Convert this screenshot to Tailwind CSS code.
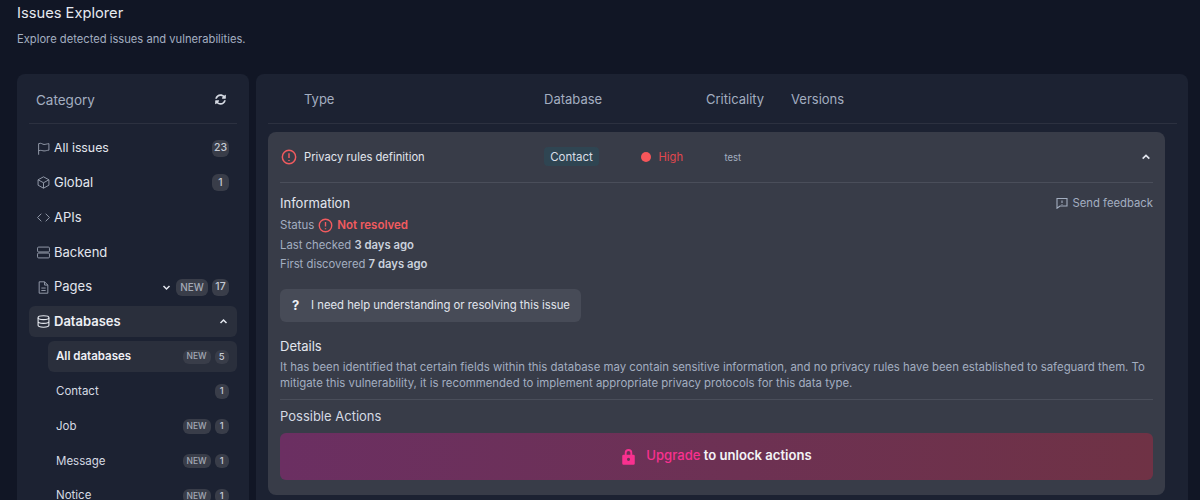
<!DOCTYPE html>
<html lang="en">
<head>
    <meta charset="UTF-8">
    <title>Issues Explorer</title>
    <script src="https://cdn.jsdelivr.net/npm/@tailwindcss/browser@4"></script>
</head>
<body class="h-[500px] overflow-hidden bg-[#111625] font-['Inter',sans-serif] text-[#cbd5e1]">
    <div class="px-[17px] pt-[3px]">
        <h1 class="h-[20px] text-[14.7px] leading-[20px] text-[#e5e9f0]">Issues Explorer</h1>
        <p class="mt-[7px] h-[18px] text-[11.2px] leading-[18px] text-[#a3aec0]">Explore detected issues and vulnerabilities.</p>

        <div class="mt-[26px] flex gap-[7px]">
            <!-- sidebar -->
            <aside class="h-[440px] w-[232px] shrink-0 rounded-lg bg-[#1c2232] px-[12px]">
                <div class="flex h-[49.5px] items-center justify-between border-b border-[#2c3140] pl-[7px] pr-[11px] pt-[3px]">
                    <span class="text-[13.5px] text-[#a3aec0]">Category</span>
                    <svg class="h-[11px] w-[11px] text-[#d5dae3]" viewBox="0 0 512 512" fill="currentColor"><path d="M370.72 133.28C339.458 104.008 298.888 87.962 255.848 88c-77.458.068-144.328 53.178-162.791 126.85-1.344 5.363-6.122 9.15-11.651 9.15H24.103c-7.498 0-13.194-6.807-11.807-14.176C33.933 94.924 134.813 8 256 8c66.448 0 126.791 26.136 171.315 68.685L463.03 40.97C478.149 25.851 504 36.559 504 57.941V192c0 13.255-10.745 24-24 24H345.941c-21.382 0-32.09-25.851-16.971-40.971l41.75-41.749zM32 296h134.059c21.382 0 32.09 25.851 16.971 40.971l-41.75 41.75c31.262 29.273 71.835 45.319 114.876 45.28 77.418-.07 144.315-53.144 162.787-126.849 1.344-5.363 6.122-9.15 11.651-9.15h57.304c7.498 0 13.194 6.807 11.807 14.176C478.067 417.076 377.187 504 256 504c-66.448 0-126.791-26.136-171.315-68.685L48.97 471.03C33.851 486.149 8 475.441 8 454.059V320c0-13.255 10.745-24 24-24z"/></svg>
                </div>
                <div class="mt-[9px] flex flex-col gap-[3.8px]">
                    <div class="flex h-[31px] items-center pl-[8px] pr-[8px]">
                        <svg class="mr-[4px] h-[13px] w-[13px] text-[#949bab]" viewBox="0 0 24 24" fill="none" stroke="currentColor" stroke-width="1.8"><path d="M3 23.500V3c5-2 7 1.500 10 1.500S18 3.500 22 3v12c-4 .5-6 1.500-9 1.500S8 14.500 3 16"/></svg>
                        <span class="text-[12.3px] text-[#e2e6ee]">All issues</span>
                        <span class="ml-auto flex h-[17px] min-w-[17px] items-center justify-center rounded-md bg-[#393d49] px-[2px] text-[10.5px] font-medium text-[#c5cad4]">23</span>
                    </div>
                    <div class="flex h-[31px] items-center pl-[8px] pr-[8px]">
                        <svg class="mr-[4px] h-[13px] w-[13px] text-[#949bab]" viewBox="0 0 24 24" fill="none" stroke="currentColor" stroke-width="1.8"><path d="M12 1.500l10 5.500v10l-10 5.500L2 17V7z"/><path d="M2 7l10 5.500L22 7M12 12.500v10"/></svg>
                        <span class="text-[13px] text-[#e2e6ee]">Global</span>
                        <span class="ml-auto flex h-[17px] min-w-[17px] items-center justify-center rounded-md bg-[#393d49] px-[2px] text-[10.5px] font-medium text-[#c5cad4]">1</span>
                    </div>
                    <div class="flex h-[31px] items-center pl-[8px] pr-[8px]">
                        <svg class="mr-[4px] h-[13px] w-[13px] text-[#949bab]" viewBox="0 0 24 24" fill="none" stroke="currentColor" stroke-width="1.8"><path d="M8 5l-7 7 7 7M16 5l7 7-7 7"/></svg>
                        <span class="text-[13px] text-[#e2e6ee]">APIs</span>
                    </div>
                    <div class="flex h-[31px] items-center pl-[8px] pr-[8px]">
                        <svg class="mr-[4px] h-[13px] w-[13px] text-[#949bab]" viewBox="0 0 24 24" fill="none" stroke="currentColor" stroke-width="1.8"><rect x="1" y="2" width="22" height="9" rx="2"/><rect x="1" y="13" width="22" height="9" rx="2"/></svg>
                        <span class="text-[13px] text-[#e2e6ee]">Backend</span>
                    </div>
                    <div class="flex h-[31px] items-center pl-[8px] pr-[8px]">
                        <svg class="mr-[4px] h-[13px] w-[13px] text-[#949bab]" viewBox="0 0 24 24" fill="none" stroke="currentColor" stroke-width="1.8"><path d="M14 1.500H4v21h16V7.500zM14 1.500v6h6M8 13h8M8 17.500h8"/></svg>
                        <span class="text-[13px] text-[#e2e6ee]">Pages</span>
                        <svg class="ml-auto mr-[5px] h-[9px] w-[9px] text-[#e2e6ee]" viewBox="0 0 24 24" fill="none" stroke="currentColor" stroke-width="4"><path d="M4 8l8 8 8-8"/></svg>
                        <span class="mr-[4px] flex h-[17px] w-[32px] items-center justify-center rounded-md bg-[#393d49] text-[10px] font-medium text-[#a3a9b5]">NEW</span>
                        <span class="flex h-[17px] min-w-[17px] items-center justify-center rounded-md bg-[#393d49] px-[2px] text-[10.5px] font-medium text-[#c5cad4]">17</span>
                    </div>
                    <div class="flex h-[31px] items-center rounded-md bg-[#2a2f3c] pl-[8px] pr-[9px]">
                        <svg class="mr-[4px] h-[13px] w-[13px] text-[#e8ebf1]" viewBox="0 0 24 24" fill="none" stroke="currentColor" stroke-width="2"><ellipse cx="12" cy="5" rx="10" ry="3.500"/><path d="M2 5v14c0 1.900 4.500 3.500 10 3.500s10-1.600 10-3.500V5M2 12c0 1.900 4.500 3.500 10 3.500s10-1.600 10-3.500"/></svg>
                        <span class="text-[13px] font-semibold text-[#eef0f5]">Databases</span>
                        <svg class="ml-auto h-[9px] w-[9px] text-[#e2e6ee]" viewBox="0 0 24 24" fill="none" stroke="currentColor" stroke-width="4"><path d="M4 16l8-8 8 8"/></svg>
                    </div>
                    <div class="ml-[19px] flex h-[31px] items-center rounded-md bg-[#2a2f3c] pl-[8px] pr-[8px]">
                        <span class="text-[11.5px] font-semibold text-[#eef0f5]">All databases</span>
                        <span class="ml-auto mr-[4px] flex h-[14.5px] w-[28px] items-center justify-center rounded-md bg-[#393d49] text-[8.5px] font-medium text-[#a3a9b5]">NEW</span>
                        <span class="flex h-[14.5px] min-w-[14.5px] items-center justify-center rounded-md bg-[#393d49] text-[9.5px] font-medium text-[#c5cad4]">5</span>
                    </div>
                    <div class="ml-[19px] flex h-[31px] items-center pl-[8px] pr-[8px]">
                        <span class="text-[11.5px] text-[#d5dae3]">Contact</span>
                        <span class="ml-auto flex h-[14.5px] min-w-[14.5px] items-center justify-center rounded-md bg-[#393d49] text-[9.5px] font-medium text-[#c5cad4]">1</span>
                    </div>
                    <div class="ml-[19px] flex h-[31px] items-center pl-[8px] pr-[8px]">
                        <span class="text-[11.5px] text-[#d5dae3]">Job</span>
                        <span class="ml-auto mr-[4px] flex h-[14.5px] w-[28px] items-center justify-center rounded-md bg-[#393d49] text-[8.5px] font-medium text-[#a3a9b5]">NEW</span>
                        <span class="flex h-[14.5px] min-w-[14.5px] items-center justify-center rounded-md bg-[#393d49] text-[9.5px] font-medium text-[#c5cad4]">1</span>
                    </div>
                    <div class="ml-[19px] flex h-[31px] items-center pl-[8px] pr-[8px]">
                        <span class="text-[11.5px] text-[#d5dae3]">Message</span>
                        <span class="ml-auto mr-[4px] flex h-[14.5px] w-[28px] items-center justify-center rounded-md bg-[#393d49] text-[8.5px] font-medium text-[#a3a9b5]">NEW</span>
                        <span class="flex h-[14.5px] min-w-[14.5px] items-center justify-center rounded-md bg-[#393d49] text-[9.5px] font-medium text-[#c5cad4]">1</span>
                    </div>
                    <div class="ml-[19px] flex h-[31px] items-center pl-[8px] pr-[8px]">
                        <span class="text-[11.5px] text-[#d5dae3]">Notice</span>
                        <span class="ml-auto mr-[4px] flex h-[14.5px] w-[28px] items-center justify-center rounded-md bg-[#393d49] text-[8.5px] font-medium text-[#a3a9b5]">NEW</span>
                        <span class="flex h-[14.5px] min-w-[14.5px] items-center justify-center rounded-md bg-[#393d49] text-[9.5px] font-medium text-[#c5cad4]">1</span>
                    </div>
                </div>
            </aside>

            <!-- main panel -->
            <main class="h-[440px] w-[932px] shrink-0 rounded-lg bg-[#1c2232] pl-[12px] pr-[11px]">
                <div class="flex h-[49.5px] items-center border-b border-[#2c3140] pt-[3px] text-[13px] text-[#a3aec0]">
                    <span class="ml-[36px] w-[240px]">Type</span>
                    <span class="w-[162px]">Database</span>
                    <span class="w-[85px]">Criticality</span>
                    <span>Versions</span>
                </div>
                <div class="mr-[12px] mt-[8.5px] h-[363px] rounded-lg bg-[#383c48] px-[12px]">
                    <div class="flex h-[50.5px] items-center border-b border-[#4a4e5a]">
                        <svg class="ml-[0.5px] h-[16px] w-[16px] text-[#f15b5f]" viewBox="0 0 24 24" fill="none" stroke="currentColor" stroke-width="2.200"><circle cx="12" cy="12" r="10"/><path d="M12 6.500v7M12 16.500v1.500"/></svg>
                        <span class="ml-[7.500px] w-[240px] pt-[2px] text-[11.2px] text-[#e2e6ee]">Privacy rules definition</span>
                        <span class="flex h-[19px] w-[55px] items-center justify-center rounded-[4px] bg-[#2f4552] pt-[1px] text-[11.5px] text-[#d9dee6]">Contact</span>
                        <span class="ml-[42px] h-[10px] w-[10px] rounded-full bg-[#f6565a]"></span>
                        <span class="ml-[7.500px] w-[66px] pt-[2px] text-[11.2px] text-[#e0474e]">High</span>
                        <span class="pt-[2px] text-[9.5px] text-[#a3aec0]">test</span>
                        <svg class="ml-auto mr-[2px] h-[10px] w-[10px] text-[#e2e6ee]" viewBox="0 0 24 24" fill="none" stroke="currentColor" stroke-width="4"><path d="M4 16l8-8 8 8"/></svg>
                    </div>
                    <div class="mt-[11px] flex items-center justify-between">
                        <h2 class="text-[13px] leading-[19px] text-[#e2e6ee]">Information</h2>
                        <span class="flex items-center gap-[4px] text-[11.3px] text-[#a3aec0]">
                            <svg class="h-[12px] w-[12px]" viewBox="0 0 24 24" fill="none" stroke="currentColor" stroke-width="2.200"><path d="M2 3h20v15H8l-6 4.500zM12 7v5M12 14v1.500"/></svg>
                            Send feedback
                        </span>
                    </div>
                    <div class="mt-[3px] flex h-[20px] items-center text-[11.5px] text-[#a3aec0]">
                        Status
                        <svg class="mx-[4px] h-[15px] w-[15px] text-[#f15b5f]" viewBox="0 0 24 24" fill="none" stroke="currentColor" stroke-width="2.200"><circle cx="12" cy="12" r="10"/><path d="M12 6.500v7M12 16.500v1.500"/></svg>
                        <span class="font-semibold text-[#f15b5f]">Not resolved</span>
                    </div>
                    <div class="h-[19.500px] text-[11.3px] leading-[19.500px] text-[#a3aec0]">Last checked <span class="font-semibold text-[#cbd2dd]">3 days ago</span></div>
                    <div class="h-[19.500px] text-[11.3px] leading-[19.500px] text-[#a3aec0]">First discovered <span class="font-semibold text-[#cbd2dd]">7 days ago</span></div>
                    <div class="mt-[14px] flex h-[33px] w-[301px] items-center rounded-md bg-[#474b57] pl-[12px] pt-[1.5px]">
                        <span class="w-[19px] text-[13px] font-bold text-[#eef0f5]">?</span>
                        <span class="text-[11.3px] text-[#e2e6ee]">I need help understanding or resolving this issue</span>
                    </div>
                    <h2 class="mt-[15px] text-[13px] leading-[19px] text-[#e2e6ee]">Details</h2>
                    <p class="mt-[3.500px] text-[11.4px] leading-[16px] text-[#a3aec0]">It has been identified that certain fields within this database may contain sensitive information, and no privacy rules have been established to safeguard them. To mitigate this vulnerability, it is recommended to implement appropriate privacy protocols for this data type.</p>
                    <div class="mt-[7.500px] border-t border-[#4a4e5a] pt-[7px] text-[13px] leading-[19px] text-[#d5dae3]">Possible Actions</div>
                    <div class="mt-[7px] flex h-[47px] items-center justify-center gap-[10px] rounded-md bg-gradient-to-r from-[#6b2f62] to-[#6f3245]">
                        <svg class="h-[17px] w-[15px] text-[#f9308f]" viewBox="0 0 24 26" fill="currentColor"><path fill-rule="evenodd" d="M6 10V7a6 6 0 0 1 12 0v3h2a2 2 0 0 1 2 2v12a2 2 0 0 1-2 2H4a2 2 0 0 1-2-2V12a2 2 0 0 1 2-2zm3 0h6V7a3 3 0 0 0-6 0zm3 5a2.500 2.500 0 1 0 0 5 2.500 2.500 0 0 0 0-5z"/></svg>
                        <span class="text-[13.1px] font-semibold text-[#f3f4f7]"><span class="font-medium text-[#f9308f]">Upgrade</span> to unlock actions</span>
                    </div>
                </div>
            </main>
        </div>
    </div>
</body>
</html>
